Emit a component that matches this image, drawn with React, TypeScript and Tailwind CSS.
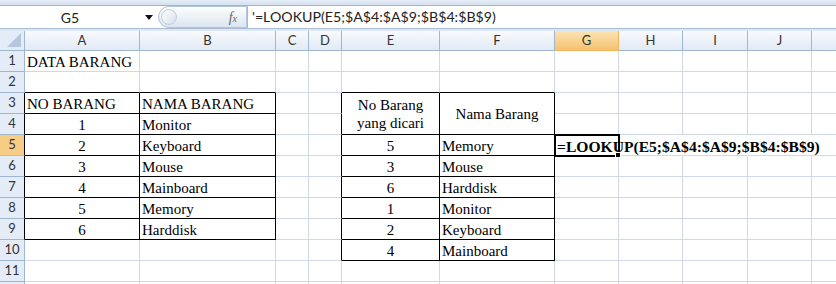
import * as React from "react";

const COLS = ["A", "B", "C", "D", "E", "F", "G", "H", "I", "J", "K"];
const ROWS = [1, 2, 3, 4, 5, 6, 7, 8, 9, 10, 11, 12];

type Cell = {text: string; align?: "left" | "center"; span?: boolean};

const CELLS: Record<string, Cell> = {
  A1: {text: "DATA BARANG"},
  A3: {text: "NO BARANG"},
  B3: {text: "NAMA BARANG"},
  E3: {text: "No Barang yang dicari", align: "center", span: true},
  F3: {text: "Nama Barang", align: "center", span: true},
};

const left = ["Monitor", "Keyboard", "Mouse", "Mainboard", "Memory", "Harddisk"];
left.forEach((name, i) => {
  CELLS[`A${i + 4}`] = {text: String(i + 1), align: "center"};
  CELLS[`B${i + 4}`] = {text: name};
});

const lookup: [number, string][] = [
  [5, "Memory"],
  [3, "Mouse"],
  [6, "Harddisk"],
  [1, "Monitor"],
  [2, "Keyboard"],
  [4, "Mainboard"],
];
lookup.forEach(([no, name], i) => {
  CELLS[`E${i + 5}`] = {text: String(no), align: "center"};
  CELLS[`F${i + 5}`] = {text: name};
});

const inTable = (r: number, c: number) => {
  const col = COLS[c];
  if ((col === "A" || col === "B") && r >= 3 && r <= 9) return true;
  if ((col === "E" || col === "F") && r >= 3 && r <= 10) return true;
  return false;
};

// the G5 formula spills over H..J, no gridlines there
const spill = (r: number, c: number) => r === 5 && c >= 6 && c <= 9;

const ColHeader: React.FC<{label: string; active?: boolean}> = ({label, active}) => (
  <div
    className={
      active
        ? "flex items-center justify-center border-r border-b border-[#f2b45c] bg-linear-to-b from-[#fbe3b4] to-[#f4c26e] [font-family:Lato,sans-serif] text-[13px] text-[#333]"
        : "flex items-center justify-center border-r border-b border-[#9eb6ce] bg-linear-to-b from-[#f8fafd] to-[#e2eaf5] [font-family:Lato,sans-serif] text-[13px] text-[#333]"
    }
  >
    {label === "K" ? "" : label}
  </div>
);

const RowHeader: React.FC<{row: number}> = ({row}) => {
  const active = row === 5;
  const edge = inTable(row, 0) ? "border-r-black" : "border-r-[#9eb6ce]";
  return (
    <div
      className={`flex items-center justify-center border-r border-b [font-family:Lato,sans-serif] text-[13px] text-[#333] ${edge} ${
        active ? "border-b-[#f2b45c] bg-[#f7cd86]" : "border-b-[#9eb6ce] bg-[#e4ecf7]"
      }`}
    >
      {row < 12 ? row : ""}
    </div>
  );
};

const GridCell: React.FC<{row: number; col: number}> = ({row, col}) => {
  const key = `${COLS[col]}${row}`;
  const cell = CELLS[key];
  const right = spill(row, col)
    ? "border-r-white"
    : inTable(row, col) || inTable(row, col + 1)
      ? "border-r-black"
      : "border-r-[#d0d7e5]";
  const spanEnd = cell?.span ? row + 1 : row;
  const bottom =
    inTable(row, col) || inTable(spanEnd + 1, col) ? "border-b-black" : "border-b-[#d0d7e5]";

  if (key === "G5") {
    return (
      <div className={`relative z-10 flex items-end border-r border-b ${right} ${bottom}`}>
        <span className="pl-[2px] whitespace-nowrap text-[15.6px] leading-[17px] font-bold">
          =LOOKUP(E5;$A$4:$A$9;$B$4:$B$9)
        </span>
        <div className="pointer-events-none absolute -top-px -left-px h-[23px] w-[66px] border-2 border-black" />
        <div className="absolute -right-[3px] -bottom-[3px] h-[6px] w-[6px] border border-white bg-black" />
      </div>
    );
  }

  if (cell?.span) {
    return (
      <div
        className={`row-span-2 flex items-center justify-center border-r border-b px-2 text-center text-[15px] leading-[18px] ${right} ${bottom}`}
      >
        {cell.text}
      </div>
    );
  }

  return (
    <div
      className={`flex items-end border-r border-b ${right} ${bottom} ${
        cell?.align === "center" ? "justify-center" : "pl-[2px]"
      }`}
    >
      {cell && <span className="whitespace-nowrap text-[15px] leading-[17px]">{cell.text}</span>}
    </div>
  );
};

const FormulaBar: React.FC = () => (
  <div className="flex h-[22px] bg-white [font-family:Lato,sans-serif] text-[13px] text-[#222]">
    <div className="flex w-[140px] items-center justify-center text-[14px]">G5</div>
    <div className="flex w-[18px] items-center justify-center">
      <svg width="8" height="5" viewBox="0 0 8 5">
        <path d="M0 0h8L4 5z" fill="#111" />
      </svg>
    </div>
    <div className="relative flex w-[89px] items-center justify-end rounded-l-full border border-[#b3c3d8] bg-linear-to-b from-[#fdfefe] to-[#dce5f0] pr-[9px]">
      <div className="absolute top-[2px] left-[2px] h-[16px] w-[16px] rounded-full border border-[#c3cfdd] bg-linear-to-br from-white to-[#d5dfeb]" />
      <span className="[font-family:'Liberation_Serif',serif] text-[14px] italic text-[#666]">
        f<span className="text-[10px]">x</span>
      </span>
    </div>
    <div className="flex flex-1 items-center border-l border-[#a9bcd5] pl-[4px] whitespace-nowrap text-[14.2px]">
      '=LOOKUP(E5;$A$4:$A$9;$B$4:$B$9)
    </div>
  </div>
);

export default function App() {
  return (
    <div className="h-[284px] w-[836px] overflow-hidden bg-white">
      <div className="h-[6px] border-b border-[#9fb5d2] bg-linear-to-b from-[#e7eef7] to-[#d3e0ef]" />
      <FormulaBar />
      <div className="h-[3px] border-t border-[#aabdd6] bg-[#dde7f3]" />
      <div className="grid grid-cols-[25px_115px_136px_33px_33px_98px_115px_64px_64px_65px_64px_80px] grid-rows-[20px_repeat(12,21px)] [font-family:'Liberation_Serif',serif] text-black">
        <div className="relative border-r border-b border-[#9eb6ce] bg-[#e4ecf7]">
          <svg className="absolute right-[3px] bottom-[3px]" width="14" height="14" viewBox="0 0 14 14">
            <path d="M14 0V14H0z" fill="#b5c7dd" />
          </svg>
        </div>
        {COLS.map((c) => (
          <ColHeader key={c} label={c} active={c === "G"} />
        ))}
        {ROWS.map((r) => (
          <React.Fragment key={r}>
            <RowHeader row={r} />
            {COLS.map((_, ci) =>
              r === 4 && (COLS[ci] === "E" || COLS[ci] === "F") ? null : (
                <GridCell key={`${r}-${ci}`} row={r} col={ci} />
              ),
            )}
          </React.Fragment>
        ))}
      </div>
    </div>
  );
}
